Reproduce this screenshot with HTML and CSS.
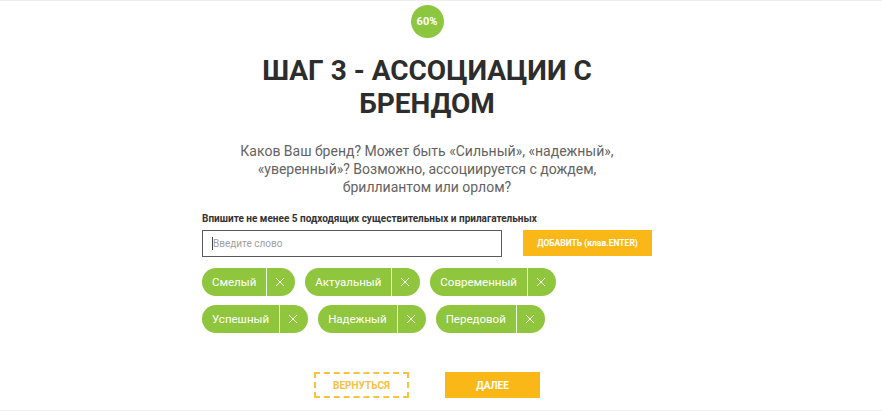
FILE: index.html
```html
<!DOCTYPE html>
<html lang="ru">
<head>
<meta charset="utf-8">
<title>Шаг 3</title>
<link rel="stylesheet" href="styles.css">
</head>
<body>
<div class="page">
  <div class="content">
    <div class="progress">60%</div>
    <h1 class="title">ШАГ 3 - АССОЦИАЦИИ С БРЕНДОМ</h1>
    <p class="lead">Каков Ваш бренд? Может быть «Сильный», «надежный», «уверенный»? Возможно, ассоциируется с дождем, бриллиантом или орлом?</p>
    <div class="form">
      <div class="label">Впишите не менее 5 подходящих существительных и прилагательных</div>
      <div class="input-row">
        <div class="field">
          <input class="input" type="text" placeholder="Введите слово">
          <span class="caret"></span>
        </div>
        <button class="add">ДОБАВИТЬ (клав.ENTER)</button>
      </div>
      <div class="tags">
        <div class="tag"><span class="tag-text">Смелый</span><span class="tag-x"><svg viewBox="0 0 10 10" width="10" height="10"><path d="M1 1L9 9M9 1L1 9" stroke="#fff" stroke-width="1" fill="none"/></svg></span></div>
        <div class="tag"><span class="tag-text">Актуальный</span><span class="tag-x"><svg viewBox="0 0 10 10" width="10" height="10"><path d="M1 1L9 9M9 1L1 9" stroke="#fff" stroke-width="1" fill="none"/></svg></span></div>
        <div class="tag"><span class="tag-text">Современный</span><span class="tag-x"><svg viewBox="0 0 10 10" width="10" height="10"><path d="M1 1L9 9M9 1L1 9" stroke="#fff" stroke-width="1" fill="none"/></svg></span></div>
        <div class="tag"><span class="tag-text">Успешный</span><span class="tag-x"><svg viewBox="0 0 10 10" width="10" height="10"><path d="M1 1L9 9M9 1L1 9" stroke="#fff" stroke-width="1" fill="none"/></svg></span></div>
        <div class="tag"><span class="tag-text">Надежный</span><span class="tag-x"><svg viewBox="0 0 10 10" width="10" height="10"><path d="M1 1L9 9M9 1L1 9" stroke="#fff" stroke-width="1" fill="none"/></svg></span></div>
        <div class="tag"><span class="tag-text">Передовой</span><span class="tag-x"><svg viewBox="0 0 10 10" width="10" height="10"><path d="M1 1L9 9M9 1L1 9" stroke="#fff" stroke-width="1" fill="none"/></svg></span></div>
      </div>
    </div>
    <div class="nav">
      <button class="back">ВЕРНУТЬСЯ</button>
      <button class="next">ДАЛЕЕ</button>
    </div>
  </div>
</div>
</body>
</html>
```
FILE: styles.css
```css
* { box-sizing: border-box; }
html, body { margin: 0; padding: 0; background: #fff; }
body { font-family: Roboto, "Liberation Sans", sans-serif; color: #333; }

.page {
  width: 882px;
  height: 411px;
  border-top: 1px solid #eeeeee;
  border-bottom: 1px solid #eeeeee;
  overflow: hidden;
  padding-right: 28px;
}

.content {
  width: 450px;
  margin: 0 auto;
  display: flex;
  flex-direction: column;
  align-items: center;
}

.progress {
  margin-top: 4px;
  width: 33px;
  height: 33px;
  border-radius: 50%;
  background: #8dc63f;
  color: #fff;
  font-weight: 700;
  font-size: 11px;
  display: flex;
  align-items: center;
  justify-content: center;
}

.title {
  margin: 16px 0 0;
  font-size: 28px;
  line-height: 33px;
  font-weight: 700;
  color: #2d2d2d;
  text-align: center;
}

.lead {
  margin: 22px 0 0;
  max-width: 400px;
  font-size: 14px;
  line-height: 18px;
  color: #636363;
  text-align: center;
}

.form {
  align-self: stretch;
  margin-top: 16px;
}

.label {
  font-size: 10px;
  line-height: 13px;
  font-weight: 700;
  color: #333;
}

.input-row {
  margin-top: 5px;
  display: flex;
  justify-content: space-between;
}

.field {
  position: relative;
  width: 300px;
  height: 27px;
}

.input {
  width: 100%;
  height: 100%;
  border: 1px solid #5a5a5a;
  padding: 0 10px;
  font-family: Roboto, "Liberation Sans", sans-serif;
  font-size: 10px;
  color: #333;
  outline: none;
}
.input::placeholder { color: #a0a0a0; }

.caret {
  position: absolute;
  left: 10px;
  top: 7px;
  width: 1px;
  height: 13px;
  background: #444;
}

.add {
  width: 129px;
  height: 26px;
  border: 0;
  background: #f9b817;
  color: #fff;
  font-family: Roboto, "Liberation Sans", sans-serif;
  font-weight: 700;
  font-size: 8.5px;
  padding: 0;
}

.tags {
  margin-top: 11px;
  display: flex;
  flex-wrap: wrap;
  column-gap: 10px;
  row-gap: 9px;
}

.tag {
  display: flex;
  height: 28px;
  border-radius: 14px;
  background: #8fc63d;
  color: #fff;
  font-size: 11.5px;
}

.tag-text {
  display: flex;
  align-items: center;
  padding: 0 10px;
  border-right: 1px solid rgba(255,255,255,0.85);
}

.tag-x {
  width: 28px;
  display: flex;
  align-items: center;
  justify-content: center;
  padding-right: 2px;
  opacity: 0.9;
}

.nav {
  margin-top: 39px;
  display: flex;
  gap: 36px;
}

.back, .next {
  width: 95px;
  height: 26px;
  font-family: Roboto, "Liberation Sans", sans-serif;
  font-weight: 700;
  font-size: 10px;
  padding: 0;
}

.back {
  background: #fff;
  border: 2px dashed #f9c43d;
  color: #f7c145;
}

.next {
  background: #f9b817;
  border: 0;
  color: #fff;
}
```
